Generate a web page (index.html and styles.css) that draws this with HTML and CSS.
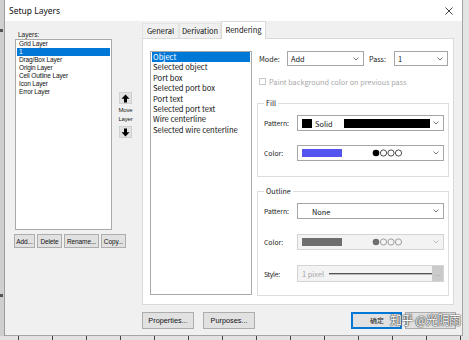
FILE: index.html
```html
<!DOCTYPE html>
<html lang="en">
<head>
    <meta charset="UTF-8">
    <title>Setup Layers</title>
    <link rel="stylesheet" href="styles.css">
</head>
<body>
    <div class="desk">
        <div class="desk-row">
            <div class="edge-left">
                <span class="mark"></span>
                <span class="mark low"></span>
            </div>

            <div class="dialog">
                <div class="titlebar">
                    <span class="title">Setup Layers</span>
                    <svg class="close" width="8" height="8" viewBox="0 0 8 8">
                        <path d="M0.5 0.5 L7.5 7.5 M7.5 0.5 L0.5 7.5" stroke="#444" stroke-width="1"/>
                    </svg>
                </div>

                <div class="dlg-body">
                    <div class="main">
                        <div class="left">
                            <div class="left-top">
                                <div class="layers-col">
                                    <div class="lbl-layers">Layers:</div>
                                    <div class="layer-list">
                                        <div class="item">Grid Layer</div>
                                        <div class="item sel">1</div>
                                        <div class="item">Drag/Box Layer</div>
                                        <div class="item">Origin Layer</div>
                                        <div class="item">Cell Outline Layer</div>
                                        <div class="item">Icon Layer</div>
                                        <div class="item">Error Layer</div>
                                    </div>
                                </div>
                                <div class="move-col">
                                    <button class="arrow-btn">
                                        <svg width="9" height="9" viewBox="0 0 9 9"><path d="M4.5 0.5 L8.5 4.8 H6 V8.5 H3 V4.8 H0.5 Z" fill="#000"/></svg>
                                    </button>
                                    <div class="move-text">Move<br>Layer</div>
                                    <button class="arrow-btn">
                                        <svg width="9" height="9" viewBox="0 0 9 9"><path d="M4.5 8.5 L8.5 4.2 H6 V0.5 H3 V4.2 H0.5 Z" fill="#000"/></svg>
                                    </button>
                                </div>
                            </div>
                            <div class="btn-row">
                                <button class="btn small w-add">Add...</button>
                                <button class="btn small w-del">Delete</button>
                                <button class="btn small w-ren">Rename...</button>
                                <button class="btn small w-copy">Copy...</button>
                            </div>
                        </div>

                        <div class="tabs">
                            <div class="tab-strip">
                                <div class="tab t-gen">General</div>
                                <div class="tab t-der">Derivation</div>
                                <div class="tab t-ren active">Rendering</div>
                            </div>
                            <div class="panel">
                                <div class="obj-list">
                                    <div class="obj sel">Object</div>
                                    <div class="obj">Selected object</div>
                                    <div class="obj">Port box</div>
                                    <div class="obj">Selected port box</div>
                                    <div class="obj">Port text</div>
                                    <div class="obj">Selected port text</div>
                                    <div class="obj">Wire centerline</div>
                                    <div class="obj">Selected wire centerline</div>
                                </div>

                                <div class="props">
                                    <div class="mode-row">
                                        <span class="lbl lbl-mode">Mode:</span>
                                        <div class="select s-mode">
                                            <span class="val">Add</span>
                                            <svg class="chev" width="6" height="4" viewBox="0 0 6 4"><polyline points="0.5,0.5 3,3 5.5,0.5" fill="none" stroke="#777"/></svg>
                                        </div>
                                        <span class="lbl lbl-pass">Pass:</span>
                                        <div class="select s-pass">
                                            <span class="val">1</span>
                                            <svg class="chev" width="6" height="4" viewBox="0 0 6 4"><polyline points="0.5,0.5 3,3 5.5,0.5" fill="none" stroke="#777"/></svg>
                                        </div>
                                    </div>

                                    <div class="check-row">
                                        <span class="checkbox"></span>
                                        <span class="check-text">Paint background color on previous pass</span>
                                    </div>

                                    <fieldset class="group g-fill">
                                        <legend>Fill</legend>
                                        <div class="field-row first">
                                            <span class="lbl lbl-field">Pattern:</span>
                                            <div class="select wide">
                                                <span class="swatch-sq"></span>
                                                <span class="val solid">Solid</span>
                                                <span class="pattern-bar"></span>
                                                <svg class="chev" width="6" height="4" viewBox="0 0 6 4"><polyline points="0.5,0.5 3,3 5.5,0.5" fill="none" stroke="#777"/></svg>
                                            </div>
                                        </div>
                                        <div class="field-row">
                                            <span class="lbl lbl-field">Color:</span>
                                            <div class="select wide">
                                                <span class="color-bar blue"></span>
                                                <svg class="dots" width="31" height="8" viewBox="0 0 31 8">
                                                    <circle cx="4" cy="4" r="3.3" fill="#000"/>
                                                    <circle cx="11.5" cy="4" r="3.1" fill="none" stroke="#222" stroke-width="0.8"/>
                                                    <circle cx="19" cy="4" r="3.1" fill="none" stroke="#222" stroke-width="0.8"/>
                                                    <circle cx="26.5" cy="4" r="3.1" fill="none" stroke="#222" stroke-width="0.8"/>
                                                </svg>
                                                <svg class="chev" width="6" height="4" viewBox="0 0 6 4"><polyline points="0.5,0.5 3,3 5.5,0.5" fill="none" stroke="#777"/></svg>
                                            </div>
                                        </div>
                                    </fieldset>

                                    <fieldset class="group g-outline">
                                        <legend>Outline</legend>
                                        <div class="field-row first">
                                            <span class="lbl lbl-field">Pattern:</span>
                                            <div class="select wide">
                                                <span class="val none">None</span>
                                                <svg class="chev" width="6" height="4" viewBox="0 0 6 4"><polyline points="0.5,0.5 3,3 5.5,0.5" fill="none" stroke="#777"/></svg>
                                            </div>
                                        </div>
                                        <div class="field-row">
                                            <span class="lbl lbl-field">Color:</span>
                                            <div class="select wide disabled">
                                                <span class="color-bar grey"></span>
                                                <svg class="dots" width="31" height="8" viewBox="0 0 31 8">
                                                    <circle cx="4" cy="4" r="3.3" fill="#6f6f6f"/>
                                                    <circle cx="11.5" cy="4" r="3.1" fill="none" stroke="#8a8a8a" stroke-width="0.8"/>
                                                    <circle cx="19" cy="4" r="3.1" fill="none" stroke="#8a8a8a" stroke-width="0.8"/>
                                                    <circle cx="26.5" cy="4" r="3.1" fill="none" stroke="#8a8a8a" stroke-width="0.8"/>
                                                </svg>
                                                <svg class="chev" width="6" height="4" viewBox="0 0 6 4"><polyline points="0.5,0.5 3,3 5.5,0.5" fill="none" stroke="#bbb"/></svg>
                                            </div>
                                        </div>
                                        <div class="field-row">
                                            <span class="lbl lbl-field style">Style:</span>
                                            <div class="select wide disabled style-field">
                                                <span class="val px">1 pixel</span>
                                                <span class="style-line"></span>
                                                <span class="style-btn">...</span>
                                            </div>
                                        </div>
                                    </fieldset>
                                </div>
                            </div>
                        </div>
                    </div>

                    <div class="bottom">
                        <button class="btn big b-prop">Properties...</button>
                        <button class="btn big b-purp">Purposes...</button>
                        <button class="btn big b-ok">确定</button>
                        <button class="btn big b-cancel"></button>
                    </div>
                </div>

                <div class="watermark">知乎 @光阴雨</div>
            </div>

            <div class="edge-right"></div>
        </div>
        <div class="ruler"></div>
    </div>
</body>
</html>
```

FILE: styles.css
```css
* {
    box-sizing: border-box;
}

body {
    margin: 0;
    width: 469px;
    height: 340px;
    overflow: hidden;
    background-color: #d6d6d6;
    font-family: "Noto Sans CJK SC", "Noto Sans", sans-serif;
    color: #000;
}

.desk {
    display: flex;
    flex-direction: column;
    width: 469px;
    height: 340px;
}

.desk-row {
    display: flex;
    height: 336px;
}

.edge-left {
    width: 5px;
    background-color: #cfcfcf;
    border-right: 1px solid #9c9c9c;
    display: flex;
    flex-direction: column;
}

.edge-left .mark {
    display: block;
    width: 3px;
    height: 3px;
    margin-top: 29px;
    background-color: #555;
}

.edge-left .mark.low {
    margin-top: 262px;
}

.dialog {
    position: relative;
    width: 458px;
    display: flex;
    flex-direction: column;
    background-color: #f0f0f0;
    border-right: 1px solid #a5a5a5;
    border-bottom: 1px solid #a5a5a5;
}

.edge-right {
    flex: 1;
    background-color: #e4e4e4;
}

.ruler {
    height: 4px;
    background-color: #e2e2e2;
    background-image: repeating-linear-gradient(90deg, transparent 0 18px, #444 18px 19px, transparent 19px 34px);
}

/* Title bar */
.titlebar {
    height: 21px;
    background-color: #fff;
    display: flex;
    align-items: center;
    justify-content: space-between;
    padding: 0 9px 0 4px;
}

.title {
    font-family: "Noto Sans", sans-serif;
    font-size: 8.5px;
    color: #111;
}

/* Dialog body */
.dlg-body {
    flex: 1;
    display: flex;
    flex-direction: column;
    padding: 0 6px 0 8px;
}

.main {
    display: flex;
    height: 284px;
}

.left {
    width: 121px;
    display: flex;
    flex-direction: column;
}

.left-top {
    display: flex;
}

.layers-col {
    width: 104px;
}

.lbl-layers {
    font-family: "Liberation Sans", sans-serif;
    font-size: 6.5px;
    line-height: 7px;
    height: 7px;
    margin: 10px 0 1px 5px;
    color: #222;
}

.layer-list {
    margin-left: 2px;
    width: 97px;
    height: 191px;
    background-color: #fff;
    border: 1px solid #a9a9a9;
    padding: 0 1px;
    font-family: "Liberation Sans", sans-serif;
    font-size: 6.5px;
    letter-spacing: -0.15px;
}

.item {
    height: 8px;
    line-height: 8px;
    padding-left: 2px;
    white-space: nowrap;
    color: #111;
}

.item.sel {
    background-color: #0078d7;
    color: #fff;
}

.move-col {
    width: 17px;
    display: flex;
    flex-direction: column;
    align-items: center;
    padding-top: 71px;
}

.arrow-btn {
    width: 13px;
    height: 12px;
    padding: 0;
    border: 1px solid #d0d0d0;
    background-color: #e1e1e1;
    display: flex;
    align-items: center;
    justify-content: center;
}

.move-text {
    font-family: "Liberation Sans", sans-serif;
    font-size: 6px;
    line-height: 8.5px;
    text-align: center;
    margin: 2px 0 3px;
    color: #222;
    letter-spacing: -0.2px;
}

.btn-row {
    display: flex;
    gap: 2px;
    margin: 4px 0 0 1px;
}

.btn {
    padding: 0;
    background-color: #e1e1e1;
    border: 1px solid #adadad;
    color: #111;
    white-space: nowrap;
}

.btn.small {
    height: 14px;
    font-family: "Liberation Sans", sans-serif;
    font-size: 6.5px;
    letter-spacing: -0.1px;
}

.w-add { width: 21px; }
.w-del { width: 25px; }
.w-ren { width: 35px; }
.w-copy { width: 25px; }

/* Tabs */
.tabs {
    margin-left: 8px;
    width: 312px;
    display: flex;
    flex-direction: column;
}

.tab-strip {
    height: 17px;
    display: flex;
    align-items: flex-end;
}

.tab {
    height: 15px;
    font-size: 7.5px;
    line-height: 14px;
    text-align: center;
    color: #111;
    border: 1px solid #e3e3e3;
    border-bottom: none;
    background-color: #f0f0f0;
}

.tab.active {
    height: 18px;
    margin-bottom: -1px;
    background-color: #fff;
    border-color: #d9d9d9;
    line-height: 15px;
    position: relative;
    z-index: 1;
}

.t-gen { width: 37px; }
.t-der { width: 42px; }
.t-ren { width: 45px; }

.panel {
    flex: 1;
    background-color: #fff;
    border: 1px solid #d9d9d9;
    display: flex;
    padding: 12px 0 0 7px;
}

.obj-list {
    width: 102px;
    height: 244px;
    border: 1px solid #a9a9a9;
    padding: 0 1px;
    font-size: 7.6px;
}

.obj {
    height: 10.4px;
    line-height: 10.4px;
    padding-left: 1px;
    white-space: nowrap;
    color: #111;
}

.obj.sel {
    background-color: #0078d7;
    color: #fff;
}

/* Properties */
.props {
    margin-left: 5px;
    width: 192px;
    font-size: 7.2px;
}

.lbl {
    color: #222;
    white-space: nowrap;
}

.mode-row {
    display: flex;
    align-items: center;
    height: 15px;
    padding-left: 2px;
}

.lbl-mode { width: 28px; }

.lbl-pass {
    width: 25px;
    margin-left: 5px;
}

.select {
    height: 15px;
    background-color: #fff;
    border: 1px solid #a6a6a6;
    display: flex;
    align-items: center;
    padding-left: 3px;
    position: relative;
}

.select .chev {
    margin-left: auto;
    margin-right: 4px;
    flex: none;
}

.s-mode { width: 77px; }
.s-pass { width: 54px; }

.val {
    font-size: 7.4px;
    color: #111;
}

.check-row {
    display: flex;
    align-items: center;
    height: 7px;
    margin-top: 12px;
    padding-left: 2px;
}

.checkbox {
    width: 7px;
    height: 7px;
    border: 1px solid #c8c8c8;
    background-color: #fff;
    margin-right: 3px;
}

.check-text {
    color: #a8a8a8;
    font-size: 7.3px;
    white-space: nowrap;
}

.group {
    margin: 0;
    border: 1px solid #dddddd;
    padding: 0 4px 0 6px;
    min-width: 0;
}

.group legend {
    padding: 0 2px;
    margin-left: 0;
    font-size: 7.2px;
    line-height: 8px;
    color: #222;
}

.g-fill {
    margin-top: 14px;
    padding-bottom: 15px;
}

.g-outline {
    margin-top: 10px;
    padding-bottom: 13px;
}

.field-row {
    display: flex;
    align-items: center;
    margin-top: 14px;
}

.field-row.first {
    margin-top: 8px;
}

.g-outline .field-row {
    margin-top: 15px;
}

.g-outline .field-row.first {
    margin-top: 8px;
}

.lbl-field {
    width: 33px;
    font-size: 6.8px;
}

.lbl-field.style {
    letter-spacing: -0.3px;
}

.select.wide {
    width: 147px;
    height: 16px;
    padding-left: 4px;
}

.swatch-sq {
    width: 10px;
    height: 9px;
    background-color: #000;
    margin-right: 3px;
}

.solid {
    width: 29px;
}

.pattern-bar {
    width: 86px;
    height: 9px;
    background-color: #000;
}

.color-bar {
    width: 40px;
    height: 8px;
}

.color-bar.blue { background-color: #5454ee; }
.color-bar.grey { background-color: #6e6e6e; }

.dots {
    margin-left: 30px;
}

.none {
    margin-left: 10px;
}

.select.disabled {
    background-color: #f3f3f3;
    border-color: #d4d4d4;
}

.select.style-field {
    height: 17px;
}

.px {
    color: #a6a6a6;
    width: 27px;
}

.style-line {
    width: 103px;
    height: 1px;
    background-color: #555;
    box-shadow: 0 1px 0 #b8b8b8;
}

.style-btn {
    margin-left: auto;
    width: 11px;
    height: 15px;
    background-color: #cacaca;
    color: #9a9a9a;
    font-size: 6px;
    line-height: 15px;
    text-align: center;
}

/* Bottom buttons */
.bottom {
    display: flex;
    height: 17px;
    margin-top: 7px;
}

.btn.big {
    height: 17px;
    font-size: 7.3px;
}

.b-prop {
    width: 52px;
    margin-left: 129px;
}

.b-purp {
    width: 52px;
    margin-left: 9px;
}

.b-ok {
    width: 51px;
    margin-left: auto;
    border: 1px solid #0078d7;
    box-shadow: inset 0 0 0 1px #0078d7;
}

.b-cancel {
    width: 51px;
    margin-left: 3px;
}

.watermark {
    position: absolute;
    left: 385px;
    top: 311px;
    font-size: 12px;
    line-height: 18px;
    color: #fff;
    letter-spacing: -0.5px;
    white-space: nowrap;
    text-shadow: 0 0 1px #333, 0 0 1px #333, 0 0 2px #555;
}
```
